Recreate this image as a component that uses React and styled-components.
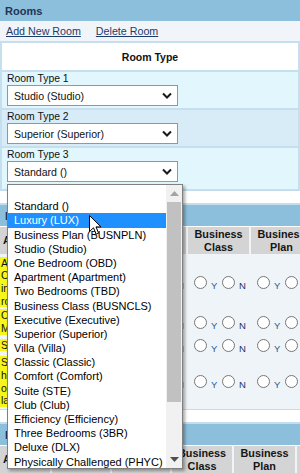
import styled, { createGlobalStyle } from "styled-components";

const GlobalStyle = createGlobalStyle`
  html, body {
    margin: 0;
    padding: 0;
    background: #ffffff;
  }
  body {
    font-family: "Liberation Sans", Arial, sans-serif;
    color: #111;
  }
`;

const Page = styled.div`
  position: relative;
  width: 300px;
  height: 473px;
  overflow: hidden;
  background: #ffffff;
`;

const Section = styled.div`
  border-top: ${(p) => (p.$first ? "0" : "2px solid #c3ddee")};
  border-bottom: 1px solid #c3ddee;
  margin-bottom: 12px;
`;

const TitleBar = styled.div`
  height: 21px;
  display: flex;
  align-items: center;
  padding-left: 5px;
  background: #8cbfdc;
  color: #1d3656;
  font-size: 11px;
  font-weight: bold;
`;

const LinkBar = styled.div`
  height: 20px;
  display: flex;
  align-items: center;
  gap: 15px;
  padding-left: 6px;
  background: #f1f5f9;
`;

const Link = styled.a`
  font-size: 10.7px;
  color: #1b3c6c;
  text-decoration: underline;
  cursor: pointer;
`;

const TypeTable = styled.div`
  display: flex;
  flex-direction: column;
  gap: 2px;
  padding: 2px 2px 1px;
  background: #c5dfef;
`;

const TypeHead = styled.div`
  height: 27px;
  display: flex;
  align-items: center;
  justify-content: center;
  background: #ffffff;
  font-size: 10.5px;
  font-weight: bold;
`;

const TypeRow = styled.div`
  padding: 1px 5px ${(p) => (p.$last ? "7px" : "2px")};
  background: ${(p) => (p.$alt ? "#d8ecf8" : "#e1f6fd")};
`;

const Label = styled.div`
  font-size: 10.4px;
  line-height: 12px;
`;

const Select = styled.div`
  width: 171px;
  height: 21px;
  box-sizing: border-box;
  display: flex;
  align-items: center;
  justify-content: space-between;
  padding: 0 5px 0 6px;
  border: 1px solid #7f9cb6;
  background: #ffffff;
  font-size: 10.6px;
`;

const Chevron = () => (
  <svg width="10" height="7" viewBox="0 0 10 7">
    <path d="M1 1.5 L5 5.5 L9 1.5" fill="none" stroke="#1a1a1a" strokeWidth="2" />
  </svg>
);

const Grid = styled.div`
  display: grid;
  grid-template-columns: ${(p) => p.$cols};
  column-gap: 2px;
`;

const HeadRow = styled(Grid)`
  margin-top: 1px;
  margin-bottom: 2px;
`;

const HeadCell = styled.div`
  height: 27px;
  display: flex;
  align-items: center;
  justify-content: ${(p) => (p.$left ? "flex-start" : "center")};
  padding-left: ${(p) => (p.$left ? "3px" : "0")};
  background: #d4d4d4;
  font-size: 10.8px;
  font-weight: bold;
  line-height: 13px;
  text-align: center;
  color: #151515;
`;

const Body = styled.div`
  background: #eff4f9;
`;

const BodyRow = styled(Grid)`
  height: ${(p) => p.$h}px;
  align-items: center;
`;

const Yellow = styled.div`
  background: #f6f51c;
  font-size: 10.5px;
  line-height: 12.6px;
  padding-left: 1px;
`;

const RadioCell = styled.div`
  display: flex;
  align-items: center;
  gap: 4px;
  padding-left: 6px;
`;

const Pair = styled.span`
  display: flex;
  align-items: flex-end;
  gap: 4px;
`;

const Circle = styled.span`
  width: 13px;
  height: 13px;
  box-sizing: border-box;
  border: 1px solid #767676;
  border-radius: 50%;
  background: #ffffff;
`;

const YN = styled.span`
  font-size: 9.5px;
  line-height: 10px;
  width: 7px;
  margin-bottom: -2px;
  color: ${(p) => (p.$n ? "#22306a" : "#2d5d92")};
`;

const Dropdown = styled.div`
  position: absolute;
  left: 7px;
  top: 184px;
  width: 176px;
  height: 285px;
  box-sizing: border-box;
  display: flex;
  border: 1px solid #808080;
  background: #ffffff;
  box-shadow: 2px 2px 3px rgba(0, 0, 0, 0.35);
`;

const Options = styled.div`
  flex: 1;
`;

const Option = styled.div`
  height: 14.2px;
  line-height: 14.2px;
  padding-left: 6px;
  font-size: 11px;
  white-space: nowrap;
  background: ${(p) => (p.$active ? "#1e90ff" : "transparent")};
  color: ${(p) => (p.$active ? "#ffffff" : "#000000")};
`;

const Scrollbar = styled.div`
  width: 16px;
  display: flex;
  flex-direction: column;
  align-items: center;
  background: #f1f1f1;
`;

const Arrow = styled.div`
  height: 17px;
  display: flex;
  align-items: center;
  justify-content: center;
`;

const Thumb = styled.div`
  width: 14px;
  height: 200px;
  background: #c1c1c1;
`;

const Track = styled.div`
  flex: 1;
`;

const Cursor = styled.svg`
  position: absolute;
  left: 89px;
  top: 215px;
`;

const s2cols = "62px 60px 60px 61px 61px";
const s3cols = "50px 58px 58px 60px 61px 60px";

const amenities = [
  { h: 52, lines: ["Air", "Conditioning", "in all", "rooms"] },
  { h: 28, lines: ["Oven /", "Microwave"] },
  { h: 18, lines: ["Safe"] },
  { h: 55, lines: ["Shower", "head", "or bath", "large"] },
];

const options = [
  "",
  "Standard ()",
  "Luxury (LUX)",
  "Business Plan (BUSNPLN)",
  "Studio (Studio)",
  "One Bedroom (OBD)",
  "Apartment (Apartment)",
  "Two Bedrooms (TBD)",
  "Business Class (BUSNCLS)",
  "Executive (Executive)",
  "Superior (Superior)",
  "Villa (Villa)",
  "Classic (Classic)",
  "Comfort (Comfort)",
  "Suite (STE)",
  "Club (Club)",
  "Efficiency (Efficiency)",
  "Three Bedrooms (3BR)",
  "Deluxe (DLX)",
  "Physically Challenged (PHYC)",
];

function Radios() {
  return (
    <RadioCell>
      <Pair>
        <Circle />
        <YN>Y</YN>
      </Pair>
      <Pair>
        <Circle />
        <YN $n>N</YN>
      </Pair>
    </RadioCell>
  );
}

export default function App() {
  return (
    <Page>
      <GlobalStyle />
      <Section $first>
        <TitleBar>Rooms</TitleBar>
        <LinkBar>
          <Link>Add New Room</Link>
          <Link>Delete Room</Link>
        </LinkBar>
        <TypeTable>
          <TypeHead>Room Type</TypeHead>
          <TypeRow>
            <Label>Room Type 1</Label>
            <Select>
              Studio (Studio)
              <Chevron />
            </Select>
          </TypeRow>
          <TypeRow $alt>
            <Label>Room Type 2</Label>
            <Select>
              Superior (Superior)
              <Chevron />
            </Select>
          </TypeRow>
          <TypeRow $last>
            <Label>Room Type 3</Label>
            <Select>
              Standard ()
              <Chevron />
            </Select>
          </TypeRow>
        </TypeTable>
      </Section>

      <Section>
        <TitleBar>Room Amenities</TitleBar>
        <Body>
          <HeadRow $cols={s2cols}>
            <HeadCell $left>Amenity</HeadCell>
            <HeadCell>Standard</HeadCell>
            <HeadCell>Luxury</HeadCell>
            <HeadCell>
              Business
              <br />
              Class
            </HeadCell>
            <HeadCell>
              Business
              <br />
              Plan
            </HeadCell>
          </HeadRow>
          {amenities.map((a) => (
            <BodyRow key={a.lines[0]} $cols={s2cols} $h={a.h}>
              <Yellow>
                {a.lines.map((l, i) => (
                  <div key={i}>{l}</div>
                ))}
              </Yellow>
              <Radios />
              <Radios />
              <Radios />
              <Radios />
            </BodyRow>
          ))}
        </Body>
      </Section>

      <Section>
        <TitleBar>Room Features</TitleBar>
        <Body>
          <HeadRow $cols={s3cols}>
            <HeadCell $left>Amenity</HeadCell>
            <HeadCell>Standard</HeadCell>
            <HeadCell>Luxury</HeadCell>
            <HeadCell>
              Business
              <br />
              Class
            </HeadCell>
            <HeadCell>
              Business
              <br />
              Plan
            </HeadCell>
            <HeadCell>Studio</HeadCell>
          </HeadRow>
        </Body>
      </Section>

      <Dropdown>
        <Options>
          {options.map((o, i) => (
            <Option key={i} $active={o === "Luxury (LUX)"}>
              {o}
            </Option>
          ))}
        </Options>
        <Scrollbar>
          <Arrow>
            <svg width="9" height="5" viewBox="0 0 9 5">
              <path d="M0 5 L4.5 0 L9 5 Z" fill="#a3a3a3" />
            </svg>
          </Arrow>
          <Thumb />
          <Track />
          <Arrow>
            <svg width="9" height="5" viewBox="0 0 9 5">
              <path d="M0 0 L4.5 5 L9 0 Z" fill="#505050" />
            </svg>
          </Arrow>
        </Scrollbar>
      </Dropdown>

      <Cursor width="13" height="21" viewBox="0 0 13 21">
        <path
          d="M0.5 0.5 L0.5 16.5 L4.5 12.8 L7.2 19.2 L9.6 18.2 L7 11.9 L12 11.9 Z"
          fill="#ffffff"
          stroke="#000000"
          strokeWidth="1"
          strokeLinejoin="round"
        />
      </Cursor>
    </Page>
  );
}
